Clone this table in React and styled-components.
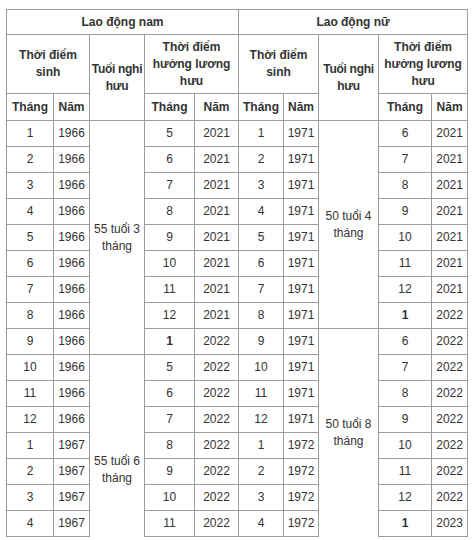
import React from "react";
import styled, { createGlobalStyle } from "styled-components";

const GlobalStyle = createGlobalStyle`
  html, body {
    margin: 0;
    padding: 0;
    background: #fff;
  }
`;

const Page = styled.div`
  padding: 9px 0 0 6px;
  background: #fff;
`;

const Table = styled.table`
  border-collapse: collapse;
  table-layout: fixed;
  width: 462px;
  font-family: "Liberation Sans", Arial, sans-serif;
  font-size: 12px;
  color: #333;
`;

const Cell = styled.td`
  border: 1px solid #9c9c9c;
  text-align: center;
  vertical-align: middle;
  padding: ${(p) => p.$push || 0}px 1px 0;
  line-height: 17px;
  height: ${(p) => p.$h || 26}px;
  box-sizing: border-box;
  font-weight: ${(p) => (p.$bold ? 700 : 400)};
  ${(p) => p.$open && "border-bottom: none;"}
`;

const Head = styled(Cell).attrs({ as: "th" })`
  font-weight: 700;
  color: #333;
  padding: 0;
  letter-spacing: ${(p) => (p.$tight ? "-0.3px" : "0")};
`;

const colWidths = [47, 36, 55, 50, 44, 45, 35, 60, 53, 36];

const men = [
  [1, 1966, 5, 2021],
  [2, 1966, 6, 2021],
  [3, 1966, 7, 2021],
  [4, 1966, 8, 2021],
  [5, 1966, 9, 2021],
  [6, 1966, 10, 2021],
  [7, 1966, 11, 2021],
  [8, 1966, 12, 2021],
  [9, 1966, 1, 2022],
  [10, 1966, 5, 2022],
  [11, 1966, 6, 2022],
  [12, 1966, 7, 2022],
  [1, 1967, 8, 2022],
  [2, 1967, 9, 2022],
  [3, 1967, 10, 2022],
  [4, 1967, 11, 2022],
];

const women = [
  [1, 1971, 6, 2021],
  [2, 1971, 7, 2021],
  [3, 1971, 8, 2021],
  [4, 1971, 9, 2021],
  [5, 1971, 10, 2021],
  [6, 1971, 11, 2021],
  [7, 1971, 12, 2021],
  [8, 1971, 1, 2022],
  [9, 1971, 6, 2022],
  [10, 1971, 7, 2022],
  [11, 1971, 8, 2022],
  [12, 1971, 9, 2022],
  [1, 1972, 10, 2022],
  [2, 1972, 11, 2022],
  [3, 1972, 12, 2022],
  [4, 1972, 1, 2023],
];

// merged "Tuổi nghỉ hưu" cells: start row -> [label, rowspan, push, open]
// the second group runs on past the bottom of the crop, so it has no bottom line
const menAges = {
  0: ["55 tuổi 3 tháng", 9, 0, false],
  9: ["55 tuổi 6 tháng", 7, 48, true],
};
const womenAges = {
  0: ["50 tuổi 4 tháng", 8, 0, false],
  8: ["50 tuổi 8 tháng", 8, 0, true],
};

const App = () => {
  return (
    <Page>
      <GlobalStyle />
      <Table>
        <colgroup>
          {colWidths.map((w, i) => (
            <col key={i} style={{ width: w }} />
          ))}
        </colgroup>
        <thead>
          <tr>
            <Head colSpan={5} $h={25}>Lao động nam</Head>
            <Head colSpan={5} $h={25}>Lao động nữ</Head>
          </tr>
          <tr>
            <Head colSpan={2} $h={59}>Thời điểm sinh</Head>
            <Head rowSpan={2} $tight>Tuổi nghi hưu</Head>
            <Head colSpan={2} $h={59}>Thời điểm hưởng lương hưu</Head>
            <Head colSpan={2} $h={59}>Thời điểm sinh</Head>
            <Head rowSpan={2} $tight>Tuổi nghi hưu</Head>
            <Head colSpan={2} $h={59}>Thời điểm hưởng lương hưu</Head>
          </tr>
          <tr>
            <Head $h={27}>Tháng</Head>
            <Head $h={27}>Năm</Head>
            <Head $h={27}>Tháng</Head>
            <Head $h={27}>Năm</Head>
            <Head $h={27}>Tháng</Head>
            <Head $h={27}>Năm</Head>
            <Head $h={27}>Tháng</Head>
            <Head $h={27}>Năm</Head>
          </tr>
        </thead>
        <tbody>
          {men.map((m, i) => {
            const w = women[i];
            const ma = menAges[i];
            const wa = womenAges[i];
            return (
              <tr key={i}>
                <Cell>{m[0]}</Cell>
                <Cell>{m[1]}</Cell>
                {ma && (
                  <Cell rowSpan={ma[1]} $push={ma[2]} $open={ma[3]}>
                    {ma[0]}
                  </Cell>
                )}
                <Cell $bold={m[2] === 1}>{m[2]}</Cell>
                <Cell>{m[3]}</Cell>
                <Cell>{w[0]}</Cell>
                <Cell>{w[1]}</Cell>
                {wa && (
                  <Cell rowSpan={wa[1]} $push={wa[2]} $open={wa[3]}>
                    {wa[0]}
                  </Cell>
                )}
                <Cell $bold={w[2] === 1}>{w[2]}</Cell>
                <Cell>{w[3]}</Cell>
              </tr>
            );
          })}
        </tbody>
      </Table>
    </Page>
  );
};

export default App;
